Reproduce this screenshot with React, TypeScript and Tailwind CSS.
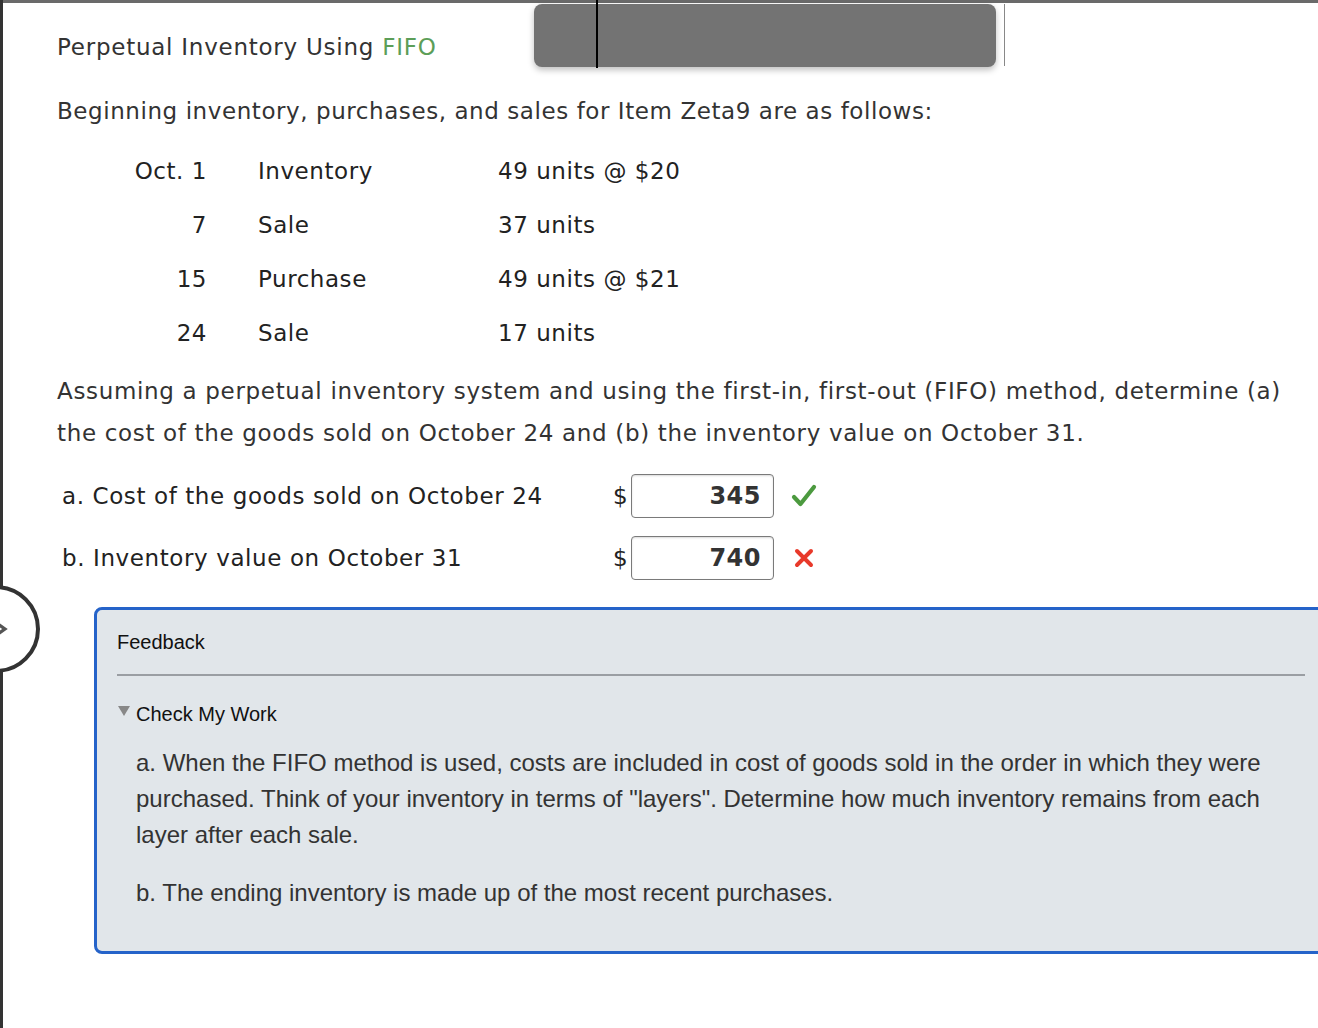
import React from 'react'

const rows = [
  { day: 'Oct. 1', what: 'Inventory', qty: '49 units @ $20' },
  { day: '7', what: 'Sale', qty: '37 units' },
  { day: '15', what: 'Purchase', qty: '49 units @ $21' },
  { day: '24', what: 'Sale', qty: '17 units' },
]

function Answer({ label, value, ok }: { label: string; value: string; ok: boolean }) {
  return (
    <div className="flex h-[44px] items-center">
      <div className="w-[556px] pl-[5px] text-[23px] tracking-[0.6px] text-[#222]">{label}</div>
      <span className="w-[18px] text-[23px] text-[#222]">$</span>
      <div className="flex h-[44px] w-[143px] items-center justify-end rounded-[4px] border-[1.5px] border-[#7a7a7a] pr-[12px] text-[24px] font-bold tracking-[0.5px] text-[#333] shadow-[inset_0_1px_2px_rgba(0,0,0,0.15)]">
        {value}
      </div>
      <div className="ml-[16px] flex w-[28px] items-center justify-center">
        {ok ? (
          <svg width="26" height="24" viewBox="0 0 26 24">
            <path d="M3 13 L9.5 20 L23 3" fill="none" stroke="#4c9a3f" strokeWidth="4.2" strokeLinecap="round" strokeLinejoin="round" />
          </svg>
        ) : (
          <svg width="20" height="20" viewBox="0 0 20 20">
            <path d="M3 3 L17 17 M17 3 L3 17" fill="none" stroke="#e8392a" strokeWidth="4" strokeLinecap="round" />
          </svg>
        )}
      </div>
    </div>
  )
}

export default function App() {
  return (
    <div
      className="relative h-[1028px] w-[1318px] overflow-hidden bg-white text-[#333]"
      style={{ fontFamily: '"DejaVu Sans", Verdana, sans-serif' }}
    >
      {/* window chrome overlays */}
      <div className="absolute left-0 top-0 h-[3px] w-full bg-[#6a6a6a]" />
      <div className="absolute left-0 top-0 h-full w-[3px] bg-[#333]" />
      <div className="absolute left-[534px] top-[4px] h-[63px] w-[462px] rounded-[8px] bg-[#737373] shadow-[0_3px_6px_rgba(0,0,0,0.25)]" />
      <div className="absolute left-[596px] top-0 h-[68px] w-[2px] bg-black" />
      <div className="absolute left-[1004px] top-[4px] h-[62px] w-[1px] bg-[#888]" />
      <div className="absolute left-[-48px] top-[585px] h-[88px] w-[88px] rounded-full border-[4px] border-[#333] bg-white">
        <svg className="absolute left-[40px] top-[32px]" width="12" height="16" viewBox="0 0 12 16">
          <path d="M2 3 L9 8 L2 13" fill="none" stroke="#555" strokeWidth="3.2" />
        </svg>
      </div>

      <div className="pl-[57px] pt-[30px]">
        <div className="text-[23px] leading-[34px] tracking-[0.75px] text-[#333]">
          Perpetual Inventory Using <span className="text-[#5c9e58]">FIFO</span>
        </div>

        <p className="mt-[30px] text-[23px] leading-[34px] tracking-[0.57px]">
          Beginning inventory, purchases, and sales for Item Zeta9 are as follows:
        </p>

        <div className="mt-[16px] text-[23px] tracking-[0.55px] text-[#222]">
          {rows.map((r) => (
            <div key={r.day} className="flex h-[54px] items-center">
              <div className="w-[150px] text-right">{r.day}</div>
              <div className="ml-[51px] w-[240px]">{r.what}</div>
              <div>{r.qty}</div>
            </div>
          ))}
        </div>

        <p className="mt-[10px] pr-[30px] text-[23px] leading-[42px] tracking-[0.67px]">
          Assuming a perpetual inventory system and using the first-in, first-out (FIFO) method, determine (a) the
          cost of the goods sold on October 24 and (b) the inventory value on October 31.
        </p>

        <div className="mt-[20px] flex flex-col gap-[18px]">
          <Answer label="a. Cost of the goods sold on October 24" value="345" ok />
          <Answer label="b. Inventory value on October 31" value="740" ok={false} />
        </div>
      </div>

      <div
        className="absolute left-[94px] top-[607px] h-[347px] w-[1260px] rounded-[8px] border-[3px] border-[#2563c9] bg-[#e1e6ea]"
        style={{ fontFamily: '"Liberation Sans", Arial, sans-serif' }}
      >
        <div className="pl-[20px] pr-[46px] pt-[18px]">
          <div className="text-[20px] leading-[28px] text-[#111]">Feedback</div>
          <div className="mt-[18px] h-[2px] bg-[#9a9ea3]" />
          <div className="mt-[24px] flex items-center text-[20px] leading-[28px] text-[#111]">
            <svg width="16" height="12" viewBox="0 0 16 12" className="mr-[3px] -mt-[6px]">
              <path d="M1 1 L13 1 L7 11 Z" fill="#888" />
            </svg>
            Check My Work
          </div>
          <div className="mt-[17px] pl-[19px] text-[24px] leading-[36px] text-[#333]">
            <p>
              a. When the FIFO method is used, costs are included in cost of goods sold in the order in which they were
              purchased. Think of your inventory in terms of "layers". Determine how much inventory remains from each
              layer after each sale.
            </p>
            <p className="mt-[22px]">b. The ending inventory is made up of the most recent purchases.</p>
          </div>
        </div>
      </div>
    </div>
  )
}
